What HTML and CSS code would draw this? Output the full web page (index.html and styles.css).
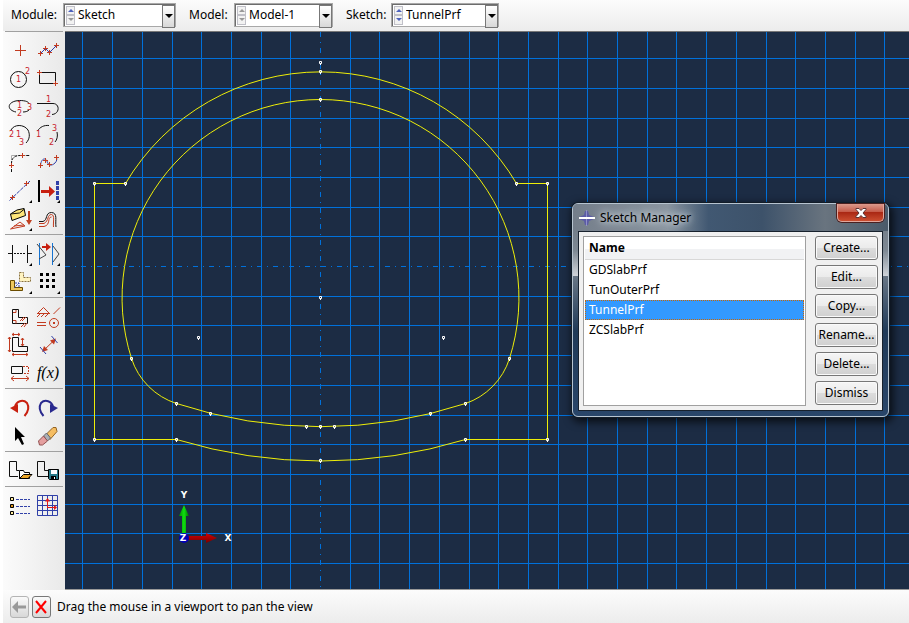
FILE: index.html
```html
<!DOCTYPE html>
<html lang="en">
<head>
    <meta charset="utf-8">
    <title>Sketch</title>
    <link rel="stylesheet" href="styles.css">
</head>
<body>
    <header class="context-bar">
        <label for="module">Module:</label>
        <div class="combo combo-wide">
            <div class="spinner">
                <button aria-label="Previous module" class="up"></button>
                <button aria-label="Next module" class="down" disabled></button>
            </div>
            <select id="module"><option>Sketch</option></select>
        </div>
        <label for="model">Model:</label>
        <div class="combo">
            <div class="spinner">
                <button aria-label="Previous model" class="up" disabled></button>
                <button aria-label="Next model" class="down" disabled></button>
            </div>
            <select id="model"><option>Model-1</option></select>
        </div>
        <label for="sketch">Sketch:</label>
        <div class="combo combo-medium">
            <div class="spinner">
                <button aria-label="Previous sketch" class="up"></button>
                <button aria-label="Next sketch" class="down"></button>
            </div>
            <select id="sketch"><option>TunnelPrf</option></select>
        </div>
    </header>

    <main class="workspace">
        <nav class="toolbox">
            <div class="tool-group">
                <button class="tool" aria-label="Isolated point"><svg viewBox="0 0 28 28"><path class="red" d="M9 13.5h11M14.5 8v11"/></svg></button>
                <button class="tool" aria-label="Connected lines"><svg viewBox="0 0 28 28"><path class="blue" d="M6.5 16.5l5-5 4 4 7-7"/><path class="red" d="M4 16.5h5M6.5 14v5M9 11.5h5M11.5 9v5M13 15.5h5M15.5 13v5M20 8.5h5M22.5 6v5"/></svg></button>
                <button class="tool" aria-label="Circle"><svg viewBox="0 0 28 28"><circle class="ink" cx="12.5" cy="14.5" r="8"/><text x="10" y="17">1</text><text x="19" y="9">2</text></svg></button>
                <button class="tool" aria-label="Rectangle"><svg viewBox="0 0 28 28"><path class="ink" d="M5.5 7.5h16v11h-16z"/><path class="red" d="M3 7.5h5M5.5 5v5M19 18.5h5M21.5 16v5"/></svg></button>
                <button class="tool" aria-label="Ellipse"><svg viewBox="0 0 28 28"><path class="ink" d="M10 19C0 17 1 8 13.5 7.5C20 7.5 23 9 23 11M17 19C20 19 22 18 23 17"/><text x="11" y="15">1</text><text x="21" y="17">3</text><text x="11" y="23">2</text></svg></button>
                <button class="tool" aria-label="Tangent arc"><svg viewBox="0 0 28 28"><path class="ink" d="M3 10.5H19C26 10.5 26 21 18 21.5"/><text x="12" y="9">1</text><text x="12" y="24">2</text></svg></button>
                <button class="tool" aria-label="Arc by center"><svg viewBox="0 0 28 28"><path class="ink" d="M5 9C8 3 18 3 22 9C24 13 24 18 20 22"/><text x="10" y="16">1</text><text x="3" y="16">2</text><text x="13" y="24">3</text></svg></button>
                <button class="tool" aria-label="Arc through three points"><svg viewBox="0 0 28 28"><path class="ink" d="M3.5 10C6 6 10 4 15 4.5M23 11C24 15 23 19 21 21"/><text x="2" y="16">1</text><text x="18" y="10">3</text><text x="15" y="24">2</text></svg></button>
                <button class="tool" aria-label="Fillet"><svg viewBox="0 0 28 28"><path class="gray" d="M5.5 11V6.5H11"/><path class="ink" stroke-dasharray="3 1" d="M5.5 23V14C5.5 9 9 6.5 14 6.5H24"/><path class="red" d="M3 16.5h5M5.5 14v5M14 6.5h5M16.5 4v5"/></svg></button>
                <button class="tool" aria-label="Spline"><svg viewBox="0 0 28 28"><path class="blue" d="M6.5 16.5C7 10 11 8 13 12C14 17 18 17 21 14C23 12 23 10 22.5 8"/><path class="red" d="M4 16.5h5M6.5 14v5M9 11.5h5M11.5 9v5M13 15.5h5M15.5 13v5M20 8.5h5M22.5 6v5"/></svg></button>
                <button class="tool more" aria-label="Construction line"><svg viewBox="0 0 28 28"><path class="blue" stroke-dasharray="4 1" d="M3.5 23.5L24 4"/><path class="red" d="M4 20.5h5M6.5 18v5M18 6.5h5M20.5 4v5"/></svg></button>
                <button class="tool more" aria-label="Offset edges"><svg viewBox="0 0 28 28"><path d="M4 3h2v22H4z"/><path fill="#c82010" d="M7 13h8V9l6 5.500-6 5.500v-4H7z"/><path class="blue thick" stroke-dasharray="4 1" d="M23.5 4v20"/></svg></button>
                <button class="tool more" aria-label="Project edges"><svg viewBox="0 0 28 28"><path fill="#ffe779" stroke="#000" d="M4.5 9L11 5l7-1.500 1.500 7L6 15.500z"/><path class="ink" d="M4.500 9l9-1 5-4"/><path class="red" d="M4.500 24L14 17l5 4zM8 21l10-1"/><path fill="#c04020" d="M22 6h2v9h2l-3 5-3-5h2z"/></svg></button>
                <button class="tool" aria-label="Offset curves"><svg viewBox="0 0 28 28"><path class="ink" d="M5 16.5h4C14 15 11 7.5 17.5 7.5C24 8 21 15 22 22"/><path class="red" d="M5 18.5h5C15 16 13 9.5 17.5 9.5C21 10 19 17 19.5 22M5 21.5h5C17 20 13 12 17.5 12"/></svg></button>
            </div>
            <div class="tool-group">
                <button class="tool more" aria-label="Trim"><svg viewBox="0 0 28 28"><path class="ink" d="M6.5 5v18M21.5 5v18M2 13.5h5M21 13.5h5"/><path class="ink" stroke-dasharray="2 1" d="M8 13.5h12"/></svg></button>
                <button class="tool more" aria-label="Translate"><svg viewBox="0 0 28 28"><path stroke="#1673d1" d="M5.5 3v22M18.5 3v22"/><path fill="none" stroke="#444" d="M3 4l9 11-7 4M19 6l6 8-6 8"/><path fill="#c82010" d="M8 6h4V3l5 4-5 4V8H8z"/></svg></button>
                <button class="tool more" aria-label="Copy objects"><svg viewBox="0 0 28 28"><path fill="#edc75d" stroke="#6b4c00" d="M4.5 12.5h4v7h8v3h-12z"/><path fill="#fff3c0" stroke="#8a7340" stroke-dasharray="2 1" d="M13.5 4.5h4v5h7v4h-11z"/><path class="blue" stroke-dasharray="2 1" d="M8 20l5-5m-4 0h4v4"/></svg></button>
                <button class="tool more" aria-label="Linear pattern"><svg viewBox="0 0 28 28"><path d="M6 5h3v3H6zM12 5h3v3h-3zM18 5h3v3h-3zM6 11h3v3H6zM12 11h3v3h-3zM18 11h3v3h-3zM6 17h3v3H6zM12 17h3v3h-3zM18 17h3v3h-3z"/></svg></button>
            </div>
            <div class="tool-group">
                <button class="tool" aria-label="Auto constrain"><svg viewBox="0 0 28 28"><path class="ink" d="M6.5 6.5h6v8h9v6h-15z"/><path class="red" d="M7 9.5h3V7M7 17.5h3v3M14 18l4-4M16 18l4-4M15 24l4-4M18 24l3-4"/></svg></button>
                <button class="tool" aria-label="Add constraint"><svg viewBox="0 0 28 28"><path class="red" d="M3 10.5h13M4 10L9.5 4.5 15 10M3 14l3-3M7 14l3-3M11 14l3-3M19.5 11L26 4.5M3 19.5h9M3 22.5h9"/><circle class="red" cx="20" cy="20" r="4.5"/><path fill="#c23b20" d="M19 19h2v2h-2z"/></svg></button>
                <button class="tool" aria-label="Auto dimension"><svg viewBox="0 0 28 28"><path class="ink" d="M6.5 6.5h6v9h9v5h-15z"/><path class="red" d="M6 3.5h8M8 2L6 3.5 8 5M12 2l2 1.500L12 5M3.5 6v15M2 8l1.500-2L5 8M2 19l1.500 2L5 19M16.5 7v8M15 9l1.500-2L18 9M15 13l1.500 2 1.500-2M6 23.5h16M8 22l-2 1.500L8 25M20 22l2 1.500-2 1.500"/></svg></button>
                <button class="tool" aria-label="Add dimension"><svg viewBox="0 0 28 28"><path class="red" d="M9 20L21 8.5"/><path fill="#c23b20" d="M8 21l2-6 4 4zM22 7.500l-6 2 4 4z"/><path class="blue" d="M6 16l6 7M17.5 5l6 7"/></svg></button>
                <button class="tool" aria-label="Edit dimension"><svg viewBox="0 0 28 28"><path class="ink" d="M5.5 7.5h11v7h-11z"/><path class="red" stroke-dasharray="2 1" d="M17 7.5h5.500v7H17"/><path class="red" d="M5 19.5h18M8 17l-3 2.500L8 22M20 17l3 2.500-3 2.500"/></svg></button>
                <button class="tool formula" aria-label="Parameter manager">f(x)</button>
            </div>
            <div class="tool-group">
                <button class="tool" aria-label="Undo"><svg viewBox="0 0 28 28"><path fill="none" stroke="#c82010" stroke-width="2" d="M9 13C10 7 17 5 21 9C24 14 22 18 18.500 22"/><path fill="#c82010" d="M4 14l8-4v9z"/></svg></button>
                <button class="tool" aria-label="Redo"><svg viewBox="0 0 28 28"><path fill="none" stroke="#29298e" stroke-width="2" d="M19 13C18 7 11 5 7 9C4 14 6 18 9.500 22"/><path fill="#29298e" d="M24 14l-8-4v9z"/></svg></button>
                <button class="tool" aria-label="Select"><svg viewBox="0 0 28 28"><path d="M9 5v14l3-3 4 7 2-1-3-7h4z"/></svg></button>
                <button class="tool" aria-label="Delete"><svg viewBox="0 0 28 28"><path fill="#f5bd62" stroke="#946424" d="M12.500 12L19 5.500h3l1 4-7 8z"/><path fill="#a9aeb5" stroke="#65686d" d="M9.500 14l3-3 4 5-3 3z"/><path fill="#e49f9f" stroke="#925050" d="M4.500 19l5-5 4 5-5 4h-3z"/></svg></button>
            </div>
            <div class="tool-group">
                <button class="tool" aria-label="Open sketch"><svg viewBox="0 0 28 28"><path class="ink" d="M12 19.5H3.500v-15h7v9H13"/><path fill="#fff" stroke="#000" d="M13.5 21.500v-8h4l1 2h5v6z"/><path fill="#eaa629" stroke="#000" d="M13.5 21.500l4-4h8.500l-4 4z"/></svg></button>
                <button class="tool" aria-label="Save sketch"><svg viewBox="0 0 28 28"><path class="ink" d="M14 19.5H3.500v-15h7v9H14"/><path fill="#287a88" stroke="#000" d="M14.5 12.500h10v10h-9l-1-1z"/><path fill="#fff" d="M17 13h6v4h-6z"/><path d="M17 19h5v3h-5z"/><path fill="#fff" d="M20 20h1v2h-1z"/></svg></button>
            </div>
            <div class="tool-group">
                <button class="tool" aria-label="Sketch options"><svg viewBox="0 0 28 28"><path fill="#ffeb9c" stroke="#000" d="M4.5 5.500h3v3h-3zM4.5 19.500h3v3h-3z"/><path fill="#dc9218" stroke="#000" d="M4.5 12.500h3v3h-3z"/><path class="blue" stroke-dasharray="3 1" d="M10 7.5h14M10 14.500h14M10 21.500h14"/></svg></button>
                <button class="tool" aria-label="Grid settings"><svg viewBox="0 0 28 28"><path class="blue" d="M3.5 3.500h20v20h-20zM8.5 4v20M13.5 4v20M18.5 4v20M4 8.500h20M4 13.500h20M4 18.500h20"/><path fill="#e01818" d="M13 8h1v7h6v-2l3 2.500-3 2.500v-2h-7zM11 9.500L13.500 6 16 9.500z"/></svg></button>
            </div>
        </nav>

        <section class="viewport">
            <svg class="canvas">
                <defs>
                    <g id="vertex">
                        <path fill="none" stroke="#fff" d="M-1-1h2v2h-2z"/>
                        <path fill="#fff" d="M-.5 1h1v1.500h-1z"/>
                    </g>
                    <linearGradient id="green-axis">
                        <stop offset="0" stop-color="#008a00"/>
                        <stop offset=".5" stop-color="#10e010"/>
                        <stop offset="1" stop-color="#006c00"/>
                    </linearGradient>
                    <linearGradient id="red-axis" x2="0" y2="1">
                        <stop offset="0" stop-color="#d80000"/>
                        <stop offset="1" stop-color="#780000"/>
                    </linearGradient>
                </defs>
                <path id="grid" class="grid"/>
                <path id="centerlines" class="grid" stroke-dasharray="5 5 1 5"/>
                <!-- origin of the sketch plane is the center of the inner circle -->
                <g transform="translate(255.5 265.5)">
                    <path class="profile" d="M-195-114A227 227 0 0 1 196-114H227V142H145A496 496 0 0 1-144 142H-226V-114Z"/>
                    <path class="profile" d="M-189 61A198.5 198.5 0 0 1 0-198A198.5 198.5 0 0 1 189 61A70 70 0 0 1 145 106A462 462 0 0 1-144 106A70 70 0 0 1-189 61Z"/>
                    <g id="vertices"></g>
                </g>
                <g class="triad" transform="translate(119 506)">
                    <path fill="url(#green-axis)" d="M-2 0v-22h-3L0-33l5 11H2V0z"/>
                    <path fill="url(#red-axis)" d="M0-2h22v-3L33 0 22 5V2H0z"/>
                    <circle fill="#0000b8" r="5"/>
                    <text x="0" y="-40">Y</text>
                    <text x="-1" y="3">Z</text>
                    <text x="44" y="3">X</text>
                </g>
            </svg>

            <div class="dialog" role="dialog" aria-labelledby="dialog-title">
                <div class="titlebar">
                    <svg class="logo" viewBox="0 0 16 16"><path fill="#5c5ca6" d="M6 1h3l1 4 5 2v2l-5 2-1 4H6l-1-4-5-2V7l5-2z"/><path fill="#8f8fc8" d="M7 0h1v16H7z"/><path fill="#fff" d="M0 7h16v2H0z"/></svg>
                    <span id="dialog-title">Sketch Manager</span>
                    <button class="close" aria-label="Close"><svg viewBox="0 0 14 10"><path fill="#fff" stroke="#5b3535" d="M2 .5h3l2 2 2-2h3v1L9 5l3 3.500v1H9l-2-2-2 2H2v-1L5 5 2 1.500z"/></svg></button>
                </div>
                <div class="dialog-body">
                    <div class="list">
                        <table>
                            <thead>
                                <tr><th>Name</th></tr>
                            </thead>
                            <tbody>
                                <tr><td>GDSlabPrf</td></tr>
                                <tr><td>TunOuterPrf</td></tr>
                                <tr class="selected"><td>TunnelPrf</td></tr>
                                <tr><td>ZCSlabPrf</td></tr>
                            </tbody>
                        </table>
                    </div>
                    <div class="actions">
                        <button>Create...</button>
                        <button>Edit...</button>
                        <button>Copy...</button>
                        <button>Rename...</button>
                        <button>Delete...</button>
                        <button>Dismiss</button>
                    </div>
                </div>
            </div>
        </section>
    </main>

    <footer class="prompt">
        <button aria-label="Back" disabled><svg viewBox="0 0 16 16"><path fill="#999" d="M1 8l6-6v4.500h8v3H7V14z"/></svg></button>
        <button aria-label="Cancel"><svg viewBox="0 0 16 16"><path fill="none" stroke="#f00" stroke-width="2" d="M3 2l10 12M13 2L3 14"/></svg></button>
        <span>Drag the mouse in a viewport to pan the view</span>
    </footer>

    <script>
        const canvas = document.querySelector('.canvas');
        const originX = 255.5;
        const originY = 234.5;
        const spacing = 29.7;

        const vertices = [
            [0, -235], [0, -226], [0, -198], [0, 0], [-122, 40], [123, 40],
            [-189, 61], [189, 61], [-144, 106], [145, 106], [-110, 116], [110, 116],
            [-14, 129], [0, 129], [14, 129], [-226, -114], [-195, -114], [196, -114],
            [227, -114], [-226, 142], [-144, 142], [145, 142], [227, 142], [0, 163]
        ];

        document.getElementById('vertices').innerHTML = vertices
            .map(([x, y]) => `<use href="#vertex" x="${x}" y="${y}"/>`)
            .join('');

        function drawGrid() {
            const width = canvas.clientWidth;
            const height = canvas.clientHeight;
            let d = '';
            for (let i = -40; i < 80; i++) {
                if (i === 0) continue;
                const x = Math.floor(originX + i * spacing) + 0.5;
                const y = Math.floor(originY + i * spacing) + 0.5;
                if (x > 0 && x < width) d += `M${x} 0V${height}`;
                if (y > 0 && y < height) d += `M0 ${y}H${width}`;
            }
            document.getElementById('grid').setAttribute('d', d);
            document.getElementById('centerlines').setAttribute('d', `M${originX} 0V${height}M0 ${originY}H${width}`);
        }

        drawGrid();
        window.addEventListener('resize', drawGrid);
    </script>
</body>
</html>
```
FILE: styles.css
```css
* {
    box-sizing: border-box;
}
body {
    margin: 0;
    height: 100vh;
    display: flex;
    flex-direction: column;
    background: #fff;
    color: #000;
    font-family: "Noto Sans", "Open Sans", sans-serif;
    font-size: 12px;
    line-height: 20px;
}
button, select {
    font: inherit;
    color: inherit;
    margin: 0;
    padding: 0;
}
svg {
    display: block;
}

/* context bar */
.context-bar {
    display: flex;
    align-items: center;
    height: 31px;
    margin-left: 3px;
    padding: 0 0 2px 8px;
    background: linear-gradient(#fcfcfc, #ececec);
}
.context-bar label {
    width: 52px;
}
.context-bar label[for="model"],
.context-bar label[for="sketch"] {
    width: 58px;
    padding-left: 13px;
}
.combo {
    position: relative;
    display: flex;
    width: 99px;
    height: 24px;
    border: 1px solid #a8a8a8;
    background: #fff;
    box-shadow: inset 1px 1px #6c6c6c;
}
.combo-wide {
    width: 113px;
}
.combo-medium {
    width: 108px;
}
.combo::before {
    content: "";
    position: absolute;
    right: 0;
    top: 1px;
    width: 11px;
    height: 21px;
    border: 1px solid #777;
    background: linear-gradient(#fff, #d8d8d8);
    pointer-events: none;
}
.combo::after {
    content: "";
    position: absolute;
    right: 2px;
    top: 10px;
    border: 4px solid transparent;
    border-top: 4px solid #000;
    border-bottom: 0;
    pointer-events: none;
}
.combo select {
    flex: 1;
    min-width: 0;
    border: 0;
    padding-left: 3px;
    background: none;
    appearance: none;
    outline: 0;
}
.spinner {
    display: flex;
    flex-direction: column;
    width: 9px;
    margin: 2px 0 1px 2px;
}
.spinner button {
    flex: 1;
    display: flex;
    align-items: center;
    justify-content: center;
    border: 1px solid #c0c0c8;
    background: #f2f2f2;
}
.spinner button::before {
    content: "";
    border: 3px solid transparent;
}
.spinner .up::before {
    border-bottom: 3px solid #4d62bd;
    border-top: 0;
}
.spinner .down::before {
    border-top: 3px solid #4d62bd;
    border-bottom: 0;
}
.spinner .up:disabled::before {
    border-bottom-color: #999;
}
.spinner .down:disabled::before {
    border-top-color: #999;
}

/* toolbox */
.workspace {
    flex: 1;
    min-height: 0;
    display: flex;
}
.toolbox {
    width: 65px;
    padding: 0 2px 0 5px;
    background: linear-gradient(to right, #fff 3px, #fbfbfb 3px, #e9e9e9);
}
.tool-group {
    display: grid;
    grid-template-columns: 28px 28px;
    justify-content: center;
    padding: 5px 0 1px;
    border-top: 1px solid #a0a0a0;
}
.tool {
    position: relative;
    width: 28px;
    height: 28px;
    border: 0;
    background: none;
}
.tool svg {
    width: 28px;
    height: 28px;
}
.more::after {
    content: "";
    position: absolute;
    right: 2px;
    bottom: 2px;
    border-left: 3px solid transparent;
    border-bottom: 3px solid #000;
}
.tool text {
    fill: #c8232c;
    font-family: "DejaVu Sans", sans-serif;
    font-size: 8px;
}
.red, .blue, .ink, .gray {
    fill: none;
}
.red {
    stroke: #c23b20;
}
.blue {
    stroke: #3040a8;
}
.ink {
    stroke: #111;
}
.gray {
    stroke: #aaa;
}
.thick {
    stroke-width: 3px;
}
.formula {
    font-family: "Liberation Serif", serif;
    font-size: 16px;
    font-style: italic;
}

/* viewport */
.viewport {
    position: relative;
    flex: 1;
    min-width: 0;
    border-top: 1px solid #777;
    border-bottom: 1px solid #999;
    background: #1c2c44;
    overflow: hidden;
}
.canvas {
    position: absolute;
    width: 100%;
    height: 100%;
}
.grid {
    fill: none;
    stroke: #0071dc;
}
.profile {
    fill: none;
    stroke: #eeee08;
}
.triad text {
    fill: #fff;
    font-family: "DejaVu Sans", sans-serif;
    font-size: 9px;
    font-weight: bold;
    text-anchor: middle;
}

/* sketch manager */
.dialog {
    position: absolute;
    top: 171px;
    right: 20px;
    width: 317px;
    padding: 0 5px 5px;
    border: 1px solid #b7c4d0;
    border-radius: 6px;
    background: linear-gradient(#68727e, #7e8994 22%, #d0d4da 34%, #687686 34%, #203a58 60%, #29466a);
    box-shadow: 0 0 0 1px #111c28, 2px 3px 8px 2px rgba(0, 0, 0, 0.7);
}
.titlebar {
    display: flex;
    align-items: center;
    height: 27px;
    margin: 0 -5px;
    padding-left: 6px;
    border-radius: 5px 5px 0 0;
    background: linear-gradient(to right, #747e8a, #8a95a0 30%, #415872 43%, #3d526a 60%, #69747f 80%, #4a5a6a);
}
.titlebar span {
    margin-left: 5px;
    text-shadow: 0 0 6px #d5dce3, 0 0 10px #d5dce3;
}
.logo {
    width: 16px;
    height: 16px;
}
.close {
    display: flex;
    justify-content: center;
    align-items: center;
    width: 47px;
    height: 18px;
    margin: 0 4px auto auto;
    border: 1px solid #e0a79d;
    border-top: 0;
    border-radius: 0 0 5px 5px;
    background: linear-gradient(#dc9a8c, #c65c4a 45%, #aa2814 50%, #cb4e30);
    box-shadow: 0 0 0 1px #4b2020;
}
.close svg {
    width: 14px;
    height: 10px;
}
.dialog-body {
    display: flex;
    gap: 9px;
    padding: 4px;
    border: 1px solid #17212d;
    background: #f0f0f0;
}
.list {
    flex: 1;
    height: 170px;
    padding: 1px;
    border: 1px solid #a0a0a0;
    background: #fff;
}
.list table {
    width: 100%;
    border-collapse: collapse;
}
.list th {
    height: 21px;
    padding: 1px 4px;
    border-bottom: 1px solid #d8d8d8;
    background: linear-gradient(#fff 50%, #f1f2f4 50%);
    text-align: left;
    line-height: 18px;
}
.list td {
    height: 20px;
    padding: 0 4px;
}
.selected td {
    background: #3399ff;
    color: #fff;
    outline: 1px dotted #cc6600;
    outline-offset: -1px;
}
.actions {
    display: flex;
    flex-direction: column;
    gap: 5px;
    width: 63px;
}
.actions button {
    height: 24px;
    border: 1px solid #777;
    border-radius: 3px;
    background: linear-gradient(#f5f5f5, #ebebeb 50%, #dcdcdc 50%, #d0d0d0);
    box-shadow: inset 0 0 0 1px #fafafa;
    line-height: 20px;
    white-space: nowrap;
}

/* prompt area */
.prompt {
    display: flex;
    align-items: center;
    gap: 3px;
    height: 33px;
    margin-left: 3px;
    padding-left: 7px;
    background: linear-gradient(#fcfcfc, #ececec);
}
.prompt button {
    width: 19px;
    height: 22px;
    border: 1px solid #777;
    border-radius: 3px;
    background: linear-gradient(#fafafa, #d8d8d8);
}
.prompt button:disabled {
    border-color: #b4b4b4;
}
.prompt svg {
    width: 16px;
    height: 16px;
}
.prompt span {
    margin-left: 3px;
}
```
